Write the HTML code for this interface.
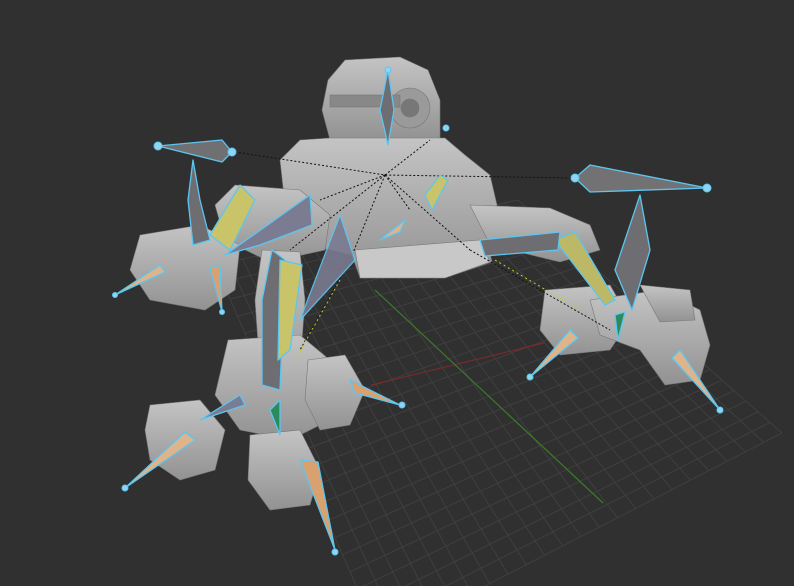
<!DOCTYPE html>
<html><head><style>
html,body{margin:0;padding:0;background:#303030;overflow:hidden;width:794px;height:586px}
svg{display:block}
</style></head><body>
<svg id="s" width="794" height="586" viewBox="0 0 794 586" xmlns="http://www.w3.org/2000/svg" style="overflow:hidden">
<rect width="794" height="586" fill="#303030"/>
<g id="grid" stroke="#3f3f3f" stroke-width="1"></g>
<line x1="371" y1="385" x2="544" y2="343" stroke="#7a2a2a" stroke-width="1.2"/>
<line x1="375" y1="290" x2="603" y2="503" stroke="#3a7a2a" stroke-width="1.2"/>
<defs>
<linearGradient id="g1" x1="0" y1="0" x2="0" y2="1"><stop offset="0" stop-color="#c4c4c4"/><stop offset="1" stop-color="#929292"/></linearGradient>
</defs>
<g fill="url(#g1)" stroke="#777" stroke-width="0.6">
<path d="M328 80 L345 60 L400 57 L428 70 L440 100 L440 140 L330 140 L322 110 Z"/>
<circle cx="410" cy="108" r="20" fill="#9a9a9a"/>
<circle cx="410" cy="108" r="9" fill="#777"/>
<rect x="330" y="95" width="70" height="12" fill="#888"/>
<path d="M280 160 L300 140 L330 138 L445 138 L465 155 L490 175 L497 205 L485 230 L492 262 L445 278 L360 278 L352 255 L310 245 L285 205 Z"/>
<path d="M355 250 L480 240 L490 262 L445 278 L360 278 Z" fill="#c8c8c8"/>
<path d="M235 185 L300 190 L330 215 L325 250 L270 262 L225 240 L215 205 Z"/>
<path d="M140 235 L200 225 L240 245 L235 290 L205 310 L150 300 L130 270 Z"/>
<path d="M470 205 L550 208 L590 225 L600 250 L560 262 L490 245 Z"/>
<path d="M262 250 L300 252 L305 300 L298 395 L262 400 L255 300 Z"/>
<path d="M228 340 L300 335 L330 360 L340 390 L330 420 L290 440 L240 430 L215 395 Z"/>
<path d="M308 360 L345 355 L365 390 L350 425 L320 430 L305 400 Z"/>
<path d="M150 405 L200 400 L225 430 L215 470 L180 480 L150 460 L145 430 Z"/>
<path d="M250 435 L300 430 L320 470 L310 505 L270 510 L248 480 Z"/>
<path d="M545 290 L610 285 L630 320 L610 350 L560 355 L540 330 Z"/>
<path d="M590 300 L660 290 L700 310 L710 345 L700 380 L665 385 L640 350 L600 335 Z"/>
<path d="M640 285 L690 290 L695 320 L660 322 Z"/>
</g>
<g stroke="#111" stroke-width="1" stroke-dasharray="2,2" fill="none">
<path d="M235 152 L385 175 L575 178"/>
<path d="M385 175 L320 200 M385 175 L290 250 M385 175 L350 260 M385 175 L430 140 M385 175 L410 210 M385 175 L470 250"/>
<path d="M350 260 L300 350 M470 250 L610 330"/>
</g>
<g stroke="#cc2" stroke-width="1" stroke-dasharray="2,3" fill="none"><path d="M340 280 L295 360 M495 260 L580 310"/></g>
<g stroke="#5cc6f0" stroke-width="1.3" stroke-linejoin="round">
<path d="M388 70 L394 110 L388 145 L380 110 Z" fill="#6e6e72"/>
<path d="M158 146 L222 140 L232 152 L222 162 Z" fill="#707072"/>
<path d="M575 178 L590 165 L707 188 L590 192 Z" fill="#727274"/>
<path d="M193 160 L200 200 L210 240 L193 245 L188 200 Z" fill="#6e6e72"/>
<path d="M640 195 L650 250 L632 310 L615 270 Z" fill="#6e6e72"/>
<path d="M210 235 L240 185 L255 200 L230 250 Z" fill="#c9c46a"/>
<path d="M225 255 L310 195 L312 225 L260 245 Z" fill="#7b7b92"/>
<path d="M440 175 L448 180 L432 210 L425 195 Z" fill="#c9c46a"/>
<path d="M555 240 L575 232 L615 300 L605 305 Z" fill="#bdb865"/>
<path d="M272 250 L285 260 L280 390 L262 385 L262 300 Z" fill="#6e6e72"/>
<path d="M280 260 L302 265 L290 350 L278 360 Z" fill="#c9c46a"/>
<path d="M300 320 L340 215 L355 260 Z" fill="#7b7b92" opacity="0.9"/>
<path d="M480 240 L560 232 L558 250 L485 256 Z" fill="#6e6e72"/>
<path d="M380 240 L405 220 L400 232 Z" fill="#e0b48a"/>
<path d="M125 488 L185 432 L195 440 Z" fill="#e0b48a"/>
<path d="M300 460 L335 550 L318 462 Z" fill="#d9a070"/>
<path d="M530 377 L570 330 L578 338 Z" fill="#e0b48a"/>
<path d="M720 410 L672 358 L680 350 Z" fill="#e0b48a"/>
<path d="M400 405 L350 380 L355 393 Z" fill="#d9a070"/>
<path d="M115 295 L160 265 L165 272 Z" fill="#e0b48a"/>
<path d="M222 312 L210 268 L220 265 Z" fill="#d9a070"/>
<path d="M270 410 L280 400 L280 435 Z" fill="#2e8a5a"/>
<path d="M615 315 L625 312 L618 340 Z" fill="#2e8a5a"/>
<path d="M200 420 L240 395 L245 405 Z" fill="#7b7b92"/>
</g>
<g fill="#8fd4f0" stroke="#5cc6f0">
<circle cx="388" cy="70" r="3"/><circle cx="158" cy="146" r="4"/><circle cx="232" cy="152" r="4"/>
<circle cx="575" cy="178" r="4"/><circle cx="707" cy="188" r="4"/><circle cx="125" cy="488" r="3"/>
<circle cx="335" cy="552" r="3"/><circle cx="720" cy="410" r="3"/><circle cx="530" cy="377" r="3"/>
<circle cx="402" cy="405" r="3"/><circle cx="115" cy="295" r="2.5"/><circle cx="222" cy="312" r="2.5"/>
<circle cx="446" cy="128" r="3"/>
</g>
</svg>
<script>
var g=document.getElementById('grid');
var L=[215,265],T=[518,200],R=[782,433],B=[380,640],N=22;
function lerp(p,q,t){return [p[0]+(q[0]-p[0])*t,p[1]+(q[1]-p[1])*t];}
var h='';
for(var i=0;i<=N;i++){var t=i/N;
var p=lerp(L,T,t),q=lerp(B,R,t),r=lerp(L,B,t),s=lerp(T,R,t);
h+='<line x1="'+p[0]+'" y1="'+p[1]+'" x2="'+q[0]+'" y2="'+q[1]+'"/><line x1="'+r[0]+'" y1="'+r[1]+'" x2="'+s[0]+'" y2="'+s[1]+'"/>';}
g.innerHTML=h;
</script>
</body></html>
